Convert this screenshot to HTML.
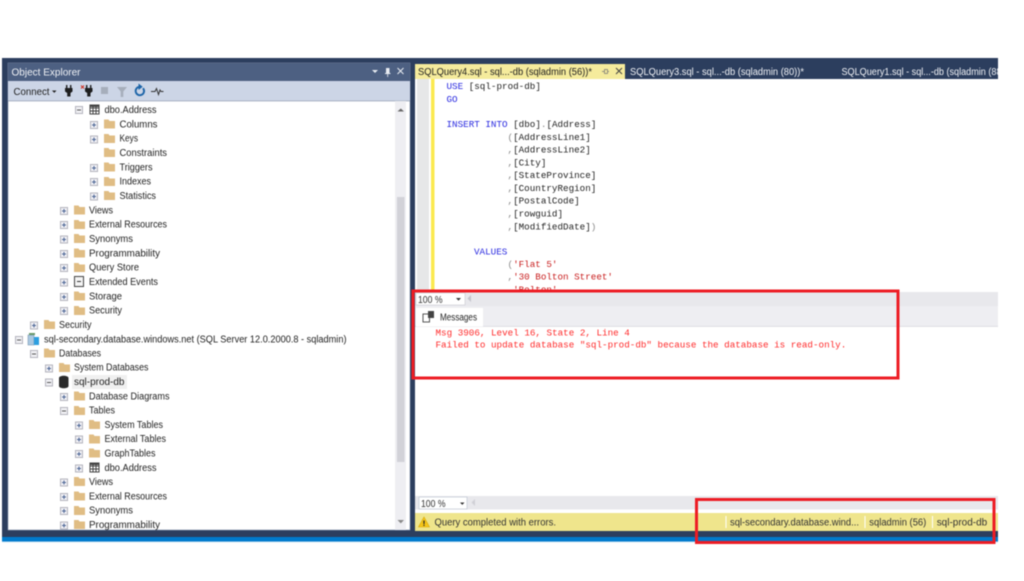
<!DOCTYPE html>
<html><head><meta charset="utf-8"><style>
html,body{margin:0;padding:0;background:#fff;width:1024px;height:581px;overflow:hidden}
svg{display:block;position:absolute;left:0;top:0;filter:blur(.45px)}
.t{font:10px "Liberation Sans",sans-serif;fill:#1e1e1e}
.m{font:9.25px "Liberation Mono",monospace;fill:#222}
.k{fill:#2a2ae0}.g{fill:#888}.s{fill:#c81c1c}
.e{font:9.25px "Liberation Mono",monospace;fill:#ff2a2a}
.w{font:10px "Liberation Sans",sans-serif;fill:#f0f2f6}
.b{font:10px "Liberation Sans",sans-serif;fill:#333}
</style></head><body>
<svg width="1024" height="581" viewBox="0 0 1024 581" xmlns="http://www.w3.org/2000/svg">
<defs>
<g id="fo"><path d="M0 2.5V1h4.5l1 1.5H11V10H0z" fill="#e0bd84"/></g>
<g id="pl"><rect x="-3.5" y="-3.5" width="7" height="7" fill="#f0f0f4" stroke="#b4b4be"/><path d="M-2 0H2M0-2V2" stroke="#4a6494"/></g>
<g id="mi"><rect x="-3.5" y="-3.5" width="7" height="7" fill="#f0f0f4" stroke="#b4b4be"/><path d="M-2 0H2" stroke="#555"/></g>
<g id="ta"><rect x=".5" y=".5" width="9" height="9" fill="#fff" stroke="#444"/><path d="M.5 3.5H9.5M.5 6.5H9.5M3.5 .5V9.5M6.5 .5V9.5" stroke="#444"/><rect x=".5" y=".5" width="9" height="2" fill="#444"/></g>
<clipPath id="tc"><rect x="9" y="101" width="386" height="429"/></clipPath>
<clipPath id="ec"><rect x="432" y="79" width="566" height="212"/></clipPath>
<clipPath id="tb"><rect x="415" y="63" width="583" height="16"/></clipPath>
</defs>

<!-- frame -->
<rect x="2" y="58" width="996" height="483" fill="#2c3e5e"/>
<rect x="2" y="537" width="996" height="4.5" fill="#007acc"/>
<rect x="2" y="541.5" width="996" height="1" fill="#cfe6f5"/>

<!-- left panel -->
<rect x="8" y="63" width="402" height="467" fill="#fff" stroke="#8b99b2" stroke-width=".6"/>
<rect x="8" y="63" width="402" height="18" fill="#4d6082"/>
<text class="w" x="11.5" y="75.5" textLength="69" lengthAdjust="spacingAndGlyphs">Object Explorer</text>
<path d="M372 70h6l-3 3z" fill="#e8ecf2"/>
<path d="M386 68h3.5v5h1v1h-2.4v3h-.8v-3H385v-1h1z" fill="#e8ecf2"/>
<path d="M397.5 68l6 6M403.5 68l-6 6" stroke="#e8ecf2" stroke-width="1"/>
<rect x="8" y="81" width="402" height="20" fill="#ccd5e6"/>
<rect x="8" y="100.5" width="402" height=".8" fill="#9aa5b8"/>
<text class="t" x="13.5" y="95" textLength="36" lengthAdjust="spacingAndGlyphs">Connect</text>
<path d="M52 90.5h4.5l-2.2 2.4z" fill="#222"/>
<g fill="#1e1e1e"><rect x="66" y="85" width="1.4" height="3"/><rect x="70" y="85" width="1.4" height="3"/><path d="M65 88h7.5v3.5l-2 1.5v3.5h-3.3V93l-2.2-1.5z"/></g>
<path d="M81 85.5l3 3M84 85.5l-3 3" stroke="#d03020"/>
<g fill="#1e1e1e"><rect x="86" y="85" width="1.4" height="3"/><rect x="90" y="85" width="1.4" height="3"/><path d="M85 88h7.5v3.5l-2 1.5v3.5h-3.3V93l-2.2-1.5z"/></g>
<rect x="101" y="87" width="7" height="7" fill="#a6aebb"/>
<path d="M117 87h10l-3.7 4.5V97h-2.6v-5.5z" fill="#a6aebb"/>
<path d="M143 88.2a4.2 4.2 0 1 1-3.2-1.4" fill="none" stroke="#1c64a8" stroke-width="1.9"/><path d="M138.5 83.5v6.5l4.2-3.2z" fill="#1c64a8"/>
<path d="M151 91.5h4l1.5-3 2 6 1.5-4.5 1 1.5h2.5" fill="none" stroke="#333" stroke-width="1"/>

<!-- tree scrollbar -->
<rect x="395" y="101" width="11" height="429" fill="#eeeef2"/>
<rect x="397" y="197" width="7.5" height="265" fill="#d2d2d8"/>
<path d="M397.5 111.5h6.5l-3.2-3z" fill="#666"/>
<path d="M397.5 520h6.5l-3.2 3.4z" fill="#888"/>

<!-- tree -->
<g clip-path="url(#tc)">
<rect x="72" y="375" width="55" height="14" fill="#f0f0f0"/>
<use href="#mi" x="79" y="110"/><use href="#ta" x="89.5" y="104.5"/><text class="t" x="104.5" y="113" textLength="52" lengthAdjust="spacingAndGlyphs">dbo.Address</text>
<use href="#pl" x="94" y="125"/><use href="#fo" x="104" y="118.5"/><text class="t" x="119.5" y="127.5" textLength="38" lengthAdjust="spacingAndGlyphs">Columns</text>
<use href="#pl" x="94" y="139.5"/><use href="#fo" x="104" y="133"/><text class="t" x="119.5" y="141.5" textLength="18.5" lengthAdjust="spacingAndGlyphs">Keys</text>
<use href="#fo" x="104" y="147"/><text class="t" x="119.5" y="156" textLength="47.5" lengthAdjust="spacingAndGlyphs">Constraints</text>
<use href="#pl" x="94" y="168"/><use href="#fo" x="104" y="161.5"/><text class="t" x="119.5" y="170.5" textLength="33" lengthAdjust="spacingAndGlyphs">Triggers</text>
<use href="#pl" x="94" y="182"/><use href="#fo" x="104" y="176"/><text class="t" x="119.5" y="184.5" textLength="31.5" lengthAdjust="spacingAndGlyphs">Indexes</text>
<use href="#pl" x="94" y="196.5"/><use href="#fo" x="104" y="190"/><text class="t" x="119.5" y="199" textLength="36.5" lengthAdjust="spacingAndGlyphs">Statistics</text>
<use href="#pl" x="64" y="211"/><use href="#fo" x="74" y="204.5"/><text class="t" x="89" y="213.5" textLength="24" lengthAdjust="spacingAndGlyphs">Views</text>
<use href="#pl" x="64" y="225"/><use href="#fo" x="74" y="219"/><text class="t" x="89" y="227.5" textLength="78" lengthAdjust="spacingAndGlyphs">External Resources</text>
<use href="#pl" x="64" y="239.5"/><use href="#fo" x="74" y="233"/><text class="t" x="89" y="242" textLength="44" lengthAdjust="spacingAndGlyphs">Synonyms</text>
<use href="#pl" x="64" y="254"/><use href="#fo" x="74" y="247.5"/><text class="t" x="89" y="256.5" textLength="71" lengthAdjust="spacingAndGlyphs">Programmability</text>
<use href="#pl" x="64" y="268"/><use href="#fo" x="74" y="262"/><text class="t" x="89" y="270.5" textLength="50" lengthAdjust="spacingAndGlyphs">Query Store</text>
<use href="#pl" x="64" y="282.5"/><rect x="74.5" y="276.5" width="9" height="10" fill="#f4f4f4" stroke="#444"/><path d="M77 281.5h4" stroke="#333"/><text class="t" x="89" y="285" textLength="69" lengthAdjust="spacingAndGlyphs">Extended Events</text>
<use href="#pl" x="64" y="297"/><use href="#fo" x="74" y="290.5"/><text class="t" x="89" y="299.5" textLength="33" lengthAdjust="spacingAndGlyphs">Storage</text>
<use href="#pl" x="64" y="311"/><use href="#fo" x="74" y="305"/><text class="t" x="89" y="313.5" textLength="33" lengthAdjust="spacingAndGlyphs">Security</text>
<use href="#pl" x="34" y="325.5"/><use href="#fo" x="44" y="319"/><text class="t" x="59" y="328" textLength="32.5" lengthAdjust="spacingAndGlyphs">Security</text>
<use href="#mi" x="19" y="340"/><rect x="28" y="335" width="6" height="10" fill="#a9c8e0" stroke="#6a8aa8" stroke-width=".5"/><rect x="34" y="337" width="5" height="8" fill="#2d9fe0"/><rect x="29" y="333" width="6" height="2" fill="#6a9a6a"/><text class="t" x="44" y="342.5" textLength="302.5" lengthAdjust="spacingAndGlyphs">sql-secondary.database.windows.net (SQL Server 12.0.2000.8 - sqladmin)</text>
<use href="#mi" x="34" y="354"/><use href="#fo" x="44" y="347.5"/><text class="t" x="59" y="356.5" textLength="42" lengthAdjust="spacingAndGlyphs">Databases</text>
<use href="#pl" x="49" y="368.5"/><use href="#fo" x="59" y="362"/><text class="t" x="74" y="370.5" textLength="74.5" lengthAdjust="spacingAndGlyphs">System Databases</text>
<use href="#mi" x="49" y="382.5"/><path d="M59 378c0-3 9.5-3 9.5 0v8c0 3-9.5 3-9.5 0z" fill="#2a2a2a"/><text class="t" x="74" y="385" textLength="50.5" lengthAdjust="spacingAndGlyphs">sql-prod-db</text>
<use href="#pl" x="64" y="397"/><use href="#fo" x="74" y="390.5"/><text class="t" x="89" y="399.5" textLength="80.5" lengthAdjust="spacingAndGlyphs">Database Diagrams</text>
<use href="#mi" x="64" y="411"/><use href="#fo" x="74" y="405"/><text class="t" x="89" y="413.5" textLength="26" lengthAdjust="spacingAndGlyphs">Tables</text>
<use href="#pl" x="79" y="425.5"/><use href="#fo" x="89" y="419"/><text class="t" x="104.5" y="428" textLength="58.5" lengthAdjust="spacingAndGlyphs">System Tables</text>
<use href="#pl" x="79" y="439.5"/><use href="#fo" x="89" y="433.5"/><text class="t" x="104.5" y="442" textLength="61.5" lengthAdjust="spacingAndGlyphs">External Tables</text>
<use href="#pl" x="79" y="454"/><use href="#fo" x="89" y="447.5"/><text class="t" x="104.5" y="456.5" textLength="51" lengthAdjust="spacingAndGlyphs">GraphTables</text>
<use href="#pl" x="79" y="468.5"/><use href="#ta" x="89.5" y="462.5"/><text class="t" x="104.5" y="471" textLength="52" lengthAdjust="spacingAndGlyphs">dbo.Address</text>
<use href="#pl" x="64" y="482.5"/><use href="#fo" x="74" y="476"/><text class="t" x="89" y="485" textLength="24" lengthAdjust="spacingAndGlyphs">Views</text>
<use href="#pl" x="64" y="497"/><use href="#fo" x="74" y="490.5"/><text class="t" x="89" y="499.5" textLength="78" lengthAdjust="spacingAndGlyphs">External Resources</text>
<use href="#pl" x="64" y="511"/><use href="#fo" x="74" y="505"/><text class="t" x="89" y="513.5" textLength="44" lengthAdjust="spacingAndGlyphs">Synonyms</text>
<use href="#pl" x="64" y="525.5"/><use href="#fo" x="74" y="519"/><text class="t" x="89" y="528" textLength="71" lengthAdjust="spacingAndGlyphs">Programmability</text>
</g>

<!-- tabs -->
<rect x="415" y="63" width="583" height="16" fill="#2c3e5e"/>
<rect x="415" y="64" width="210" height="15" fill="#f5eb9c"/>
<g clip-path="url(#tb)">
<text class="t" x="418" y="75" textLength="174" lengthAdjust="spacingAndGlyphs">SQLQuery4.sql - sql...-db (sqladmin (56))*</text>
<path d="M602 71.5h2.5M604.5 69.5v4h3v-4zM607.5 71.5h1.5" stroke="#777" stroke-width=".7" fill="none"/>
<path d="M616 68l6 6M622 68l-6 6" stroke="#444" stroke-width="1"/>
<text class="w" x="630" y="75" textLength="174" lengthAdjust="spacingAndGlyphs">SQLQuery3.sql - sql...-db (sqladmin (80))*</text>
<text class="w" x="841.5" y="75" textLength="160" lengthAdjust="spacingAndGlyphs">SQLQuery1.sql - sql...-db (sqladmin (88</text>
</g>

<!-- editor -->
<rect x="415" y="79" width="583" height="213" fill="#fff"/>
<rect x="417" y="79" width="12" height="213" fill="#e6e7e8"/>
<rect x="431" y="79" width="3.5" height="213" fill="#fbe94f"/>
<g clip-path="url(#ec)">
<text class="m" x="446.5" y="89"><tspan class="k">USE</tspan> [sql-prod-db]</text>
<text class="m k" x="446.5" y="102">GO</text>
<text class="m" x="446.5" y="127"><tspan class="k">INSERT INTO</tspan> [dbo]<tspan class="g">.</tspan>[Address]</text>
<text class="m" x="507.5" y="140"><tspan class="g">(</tspan>[AddressLine1]</text>
<text class="m" x="507.5" y="152.5"><tspan class="g">,</tspan>[AddressLine2]</text>
<text class="m" x="507.5" y="165.5"><tspan class="g">,</tspan>[City]</text>
<text class="m" x="507.5" y="178"><tspan class="g">,</tspan>[StateProvince]</text>
<text class="m" x="507.5" y="191"><tspan class="g">,</tspan>[CountryRegion]</text>
<text class="m" x="507.5" y="203.5"><tspan class="g">,</tspan>[PostalCode]</text>
<text class="m" x="507.5" y="216.5"><tspan class="g">,</tspan>[rowguid]</text>
<text class="m" x="507.5" y="229.5"><tspan class="g">,</tspan>[ModifiedDate]<tspan class="g">)</tspan></text>
<text class="m k" x="474" y="254.5">VALUES</text>
<text class="m s" x="507.5" y="267"><tspan class="g">(</tspan>'Flat 5'</text>
<text class="m s" x="507.5" y="279.5"><tspan class="g">,</tspan>'30 Bolton Street'</text>
<text class="m s" x="507.5" y="292.5"><tspan class="g">,</tspan>'Bolton'</text>
</g>

<!-- top zoom bar -->
<rect x="415" y="292" width="583" height="14" fill="#e8e8ec"/>
<rect x="416" y="293" width="49" height="12" fill="#fff" stroke="#c8c8d0" stroke-width=".6"/>
<text class="b" x="418" y="303" textLength="24.5" lengthAdjust="spacingAndGlyphs">100 %</text>
<path d="M456 298h5l-2.5 2.6z" fill="#333"/>
<path d="M471 295v7l-3.5-3.5z" fill="#c4c4cc"/>

<!-- results -->
<rect x="415" y="306" width="583" height="190" fill="#fff"/>
<rect x="415" y="306" width="583" height="20" fill="#eeeef2"/>
<rect x="415" y="326" width="583" height=".8" fill="#d8d8de"/>
<rect x="416" y="308" width="67" height="18.5" fill="#fff"/>
<rect x="423" y="314" width="6.5" height="8" fill="#fff" stroke="#444" stroke-width=".9"/><rect x="428" y="311" width="6" height="7" fill="#444"/>
<text class="t" x="440" y="320.5" textLength="37" lengthAdjust="spacingAndGlyphs">Messages</text>
<text class="e" x="435.5" y="335.5">Msg 3906, Level 16, State 2, Line 4</text>
<text class="e" x="435.5" y="347.5">Failed to update database "sql-prod-db" because the database is read-only.</text>

<!-- bottom zoom bar -->
<rect x="415" y="496" width="583" height="13.5" fill="#e8e8ec"/>
<rect x="419" y="497" width="48" height="12" fill="#fff" stroke="#c0c8d4" stroke-width=".7"/>
<text class="b" x="421" y="507" textLength="24.5" lengthAdjust="spacingAndGlyphs">100 %</text>
<path d="M460 502.5h4.5l-2.2 2.4z" fill="#333"/>
<path d="M475 499v7l-3.5-3.5z" fill="#d0d0d6"/>
<rect x="415" y="509.5" width="583" height="3.5" fill="#fff"/>

<!-- status bar -->
<rect x="415" y="513" width="583" height="18" fill="#efe58c"/>
<path d="M424 517l5.5 10h-11z" fill="#f5c518" stroke="#d9a800" stroke-width=".6"/><rect x="423.4" y="520.5" width="1.2" height="3.5" fill="#222"/><rect x="423.4" y="524.7" width="1.2" height="1.2" fill="#222"/>
<text class="b" x="434.5" y="525.5" textLength="121.5" lengthAdjust="spacingAndGlyphs">Query completed with errors.</text>
<rect x="725.5" y="516" width="1" height="12" fill="#fff"/>
<text class="b" x="730" y="525.5" textLength="129" lengthAdjust="spacingAndGlyphs">sql-secondary.database.wind...</text>
<rect x="864.5" y="516" width="1" height="12" fill="#fff"/>
<text class="b" x="869.3" y="525.5" textLength="57" lengthAdjust="spacingAndGlyphs">sqladmin (56)</text>
<rect x="932" y="516" width="1" height="12" fill="#fff"/>
<text class="b" x="936.7" y="525.5" textLength="50.5" lengthAdjust="spacingAndGlyphs">sql-prod-db</text>

<!-- red boxes -->
<rect x="413" y="291" width="485" height="87" fill="none" stroke="#ed1c24" stroke-width="3"/>
<rect x="696.5" y="499.5" width="297.5" height="43" fill="none" stroke="#ed1c24" stroke-width="3"/>
</svg>
</body></html>
